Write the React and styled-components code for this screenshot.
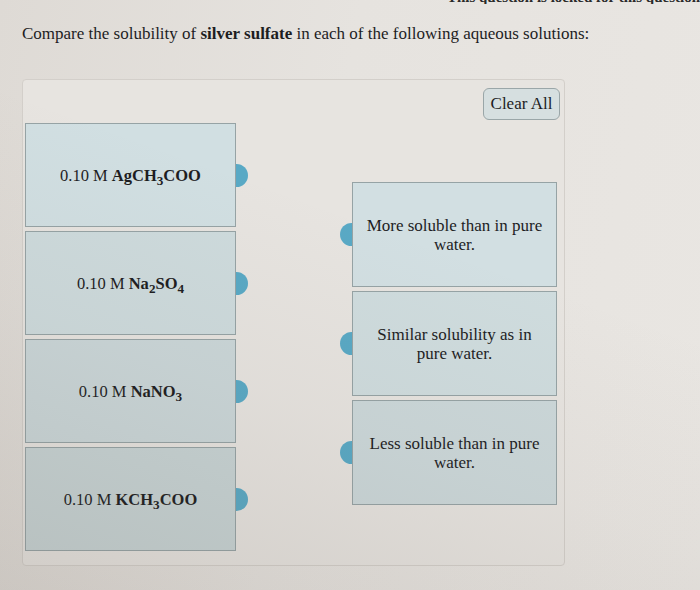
import React from 'react';
import styled, { createGlobalStyle } from 'styled-components';

const GlobalStyle = createGlobalStyle`
  html, body {
    margin: 0;
    padding: 0;
    background: #e2dfdb;
  }
  * {
    box-sizing: border-box;
  }
`;

const Page = styled.div`
  position: relative;
  width: 700px;
  height: 590px;
  overflow: hidden;
  padding: 0 0 0 22px;
  font-family: 'Liberation Serif', 'Times New Roman', serif;
  color: #1d1d1f;
  background: linear-gradient(100deg, #dedad5 0%, #e6e3df 45%, #e9e6e2 100%);

  /* screen lighting falls off toward the lower left */
  &::after {
    content: '';
    position: absolute;
    inset: 0;
    pointer-events: none;
    background: linear-gradient(20deg, rgba(95, 85, 75, 0.16) 0%, rgba(95, 85, 75, 0.05) 35%, rgba(95, 85, 75, 0) 60%);
  }
`;

const LockNotice = styled.div`
  height: 4px;
  overflow: hidden;
  text-align: right;
  font-weight: bold;
  font-size: 15px;
  line-height: 14px;
  color: #2a2a2a;

  span {
    display: block;
    margin-top: -10px;
  }
`;

const Prompt = styled.p`
  margin: 20px 0 0;
  font-size: 17px;
  line-height: 20px;
`;

const Panel = styled.section`
  width: 543px;
  height: 487px;
  margin: 35px 0 0 0;
  padding: 8px 4px 0 2px;
  border: 1px solid #d3cfca;
  border-radius: 4px;
  background: #e7e4e0;
  display: flex;
  flex-direction: column;
`;

const Toolbar = styled.div`
  display: flex;
  justify-content: flex-end;
`;

const ClearButton = styled.button`
  width: 77px;
  height: 32px;
  padding: 0;
  border: 1px solid #9aa6a8;
  border-radius: 6px;
  background: #d6dfe0;
  font-family: inherit;
  font-size: 17px;
  color: #1d1d1f;
  cursor: pointer;
`;

const Columns = styled.div`
  display: flex;
  gap: 92px;
`;

const Column = styled.div`
  display: flex;
  flex-direction: column;
  gap: 4px;
  margin-top: ${({ $offset }) => $offset}px;
`;

const Row = styled.div`
  display: flex;
  align-items: center;
`;

const Card = styled.div`
  width: ${({ $width }) => $width}px;
  height: ${({ $height }) => $height}px;
  display: flex;
  align-items: center;
  justify-content: center;
  padding: 0 12px;
  border: 1px solid #96a3a5;
  background: ${({ $fill }) => $fill};
  text-align: center;
  font-size: ${({ $size }) => $size}px;
  line-height: 19px;
`;

const Formula = styled.b`
  sub {
    font-size: 0.8em;
    line-height: 0;
    vertical-align: -0.28em;
  }
`;

const Handle = styled.span`
  width: 12px;
  height: 23px;
  flex-shrink: 0;
  background: #59a9c5;
  border-radius: ${({ $side }) => ($side === 'right' ? '0 12px 12px 0' : '12px 0 0 12px')};
`;

const sources = [
  { label: 'AgCH', sub: '3', tail: 'COO', fill: '#d1dfe2' },
  { label: 'Na', sub: '2', tail: 'SO', sub2: '4', fill: '#cedbdd' },
  { label: 'NaNO', sub: '3', tail: '', fill: '#cbd7d9' },
  { label: 'KCH', sub: '3', tail: 'COO', fill: '#c8d4d5' },
];

const targets = [
  { text: 'More soluble than in pure water.', fill: '#d2dfe2' },
  { text: 'Similar solubility as in pure water.', fill: '#cfdcde' },
  { text: 'Less soluble than in pure water.', fill: '#ccd8da' },
];

export default function App() {
  return (
    <Page>
      <GlobalStyle />
      <LockNotice>
        <span>This question is locked for this question</span>
      </LockNotice>
      <Prompt>
        Compare the solubility of <b>silver sulfate</b> in each of the following aqueous solutions:
      </Prompt>
      <Panel>
        <Toolbar>
          <ClearButton>Clear All</ClearButton>
        </Toolbar>
        <Columns>
          <Column $offset={3}>
            {sources.map((s) => (
              <Row key={s.label}>
                <Card $width={211} $height={104} $fill={s.fill} $size={16.5}>
                  <span>
                    0.10 M{' '}
                    <Formula>
                      {s.label}
                      <sub>{s.sub}</sub>
                      {s.tail}
                      {s.sub2 && <sub>{s.sub2}</sub>}
                    </Formula>
                  </span>
                </Card>
                <Handle $side="right" />
              </Row>
            ))}
          </Column>
          <Column $offset={62}>
            {targets.map((t) => (
              <Row key={t.text}>
                <Handle $side="left" />
                <Card $width={205} $height={105} $fill={t.fill} $size={17}>
                  {t.text}
                </Card>
              </Row>
            ))}
          </Column>
        </Columns>
      </Panel>
    </Page>
  );
}
